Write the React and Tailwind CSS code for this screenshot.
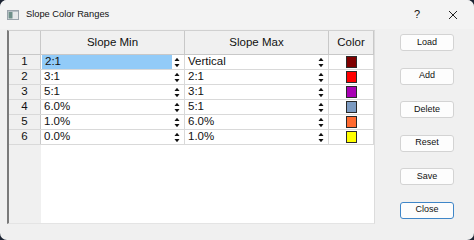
const rows = [
  { n: 1, min: '2:1', max: 'Vertical', color: '#7f0000' },
  { n: 2, min: '3:1', max: '2:1', color: '#ff0000' },
  { n: 3, min: '5:1', max: '3:1', color: '#a800b4' },
  { n: 4, min: '6.0%', max: '5:1', color: '#7c9bc2' },
  { n: 5, min: '1.0%', max: '6.0%', color: '#ff6a30' },
  { n: 6, min: '0.0%', max: '1.0%', color: '#ffff00' },
];

const buttons = ['Load', 'Add', 'Delete', 'Reset', 'Save', 'Close'];

function Spinner() {
  return (
    <div className="flex flex-col w-[10px] h-[13px] mr-[2px] justify-between">
      <svg width="10" height="6" viewBox="0 0 10 6">
        <path d="M2.5 5 L5 1.8 L7.5 5 Z" fill="#111" />
      </svg>
      <svg width="10" height="6" viewBox="0 0 10 6">
        <path d="M2.5 1 L5 4.2 L7.5 1 Z" fill="#111" />
      </svg>
    </div>
  );
}

function ValueCell({ value, selected }) {
  return (
    <div className="w-[144px] h-full flex items-center border-r border-[#d9d9d9]">
      <div className={`flex-1 h-full flex items-center pl-[3px] ${selected ? 'bg-[#92cbf8] ml-[1px]' : ''}`}>
        {value}
      </div>
      <Spinner />
    </div>
  );
}

export default function App() {
  return (
    <div className="w-[474px] h-[240px] bg-[#1c2433] font-['Liberation_Sans',Arial,sans-serif] text-[#111]">
      <div className="w-full h-full rounded-[7px] bg-[#f0f0f0] flex flex-col overflow-hidden">
        {/* title bar */}
        <div className="h-[29px] flex items-center bg-[#f3f3f3] pl-[7px] pr-[16px]">
          <svg width="12" height="10" viewBox="0 0 12 10" className="mr-[7px]">
            <rect x="0.5" y="0.5" width="11" height="9" fill="#e6e8ea" stroke="#9aa3ab" />
            <rect x="1.5" y="2" width="4" height="6.5" fill="#6f8f8a" />
            <rect x="1" y="1" width="10" height="1" fill="#b8c0c6" />
          </svg>
          <span className="text-[9.3px]">Slope Color Ranges</span>
          <span className="ml-auto text-[11px] mr-[28px]">?</span>
          <svg width="10" height="10" viewBox="0 0 10 10">
            <path d="M1 1 L9 9 M9 1 L1 9" stroke="#222" strokeWidth="1" />
          </svg>
        </div>

        {/* body */}
        <div className="flex flex-1 pl-[7px]">
          <div className="w-[368px] h-[194px] mt-[1px] border-l-2 border-l-[#7a7a7a] border-t border-t-[#d0d0d0] border-r border-r-[#dcdcdc] border-b border-b-[#e4e4e4] flex flex-col bg-white text-[11.5px]">
            {/* header */}
            <div className="flex h-[24px] bg-[#f0f0f0] border-b border-[#c8c8c8] shrink-0">
              <div className="w-[32px] border-r border-[#c8c8c8]" />
              <div className="w-[144px] border-r border-[#c8c8c8] flex items-center justify-center">Slope Min</div>
              <div className="w-[144px] border-r border-[#c8c8c8] flex items-center justify-center">Slope Max</div>
              <div className="w-[45px] border-r border-[#c8c8c8] flex items-center justify-center">Color</div>
            </div>
            {rows.map((r) => (
              <div key={r.n} className="flex h-[15px] border-b border-[#d9d9d9] shrink-0">
                <div className="w-[32px] bg-[#f0f0f0] border-r border-[#c8c8c8] flex items-center justify-center">{r.n}</div>
                <ValueCell value={r.min} selected={r.n === 1} />
                <ValueCell value={r.max} />
                <div className="w-[45px] border-r border-[#d9d9d9] flex items-center justify-center">
                  <div className="w-[11px] h-[12px] border border-[#2a2a2a]" style={{ backgroundColor: r.color }} />
                </div>
              </div>
            ))}
            <div className="flex flex-1">
              <div className="w-[32px] bg-[#f0f0f0]" />
              <div className="flex-1 bg-white" />
            </div>
          </div>

          {/* buttons */}
          <div className="ml-[25px] mt-[5px] flex flex-col gap-[16.5px]">
            {buttons.map((b) => (
              <div
                key={b}
                className={`w-[54px] h-[17px] rounded-[3px] bg-[#fdfdfd] flex items-center justify-center text-[9px] border ${
                  b === 'Close' ? 'border-[#3f86c8]' : 'border-[#d3d3d3]'
                }`}
              >
                {b}
              </div>
            ))}
          </div>
        </div>
      </div>
    </div>
  );
}
